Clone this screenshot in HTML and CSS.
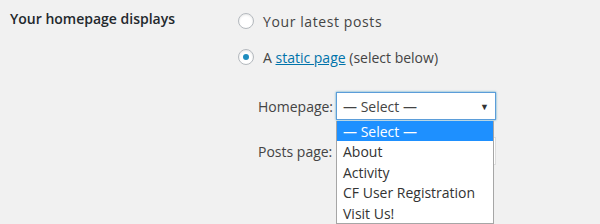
FILE: index.html
```html
<!DOCTYPE html>
<html lang="en">
<head>
    <meta charset="UTF-8">
    <title>Reading Settings</title>
    <link rel="stylesheet" href="styles.css">
</head>
<body>
    <div class="form-row">
        <div class="row-label">Your homepage displays</div>
        <div class="row-field">
            <label class="radio-line">
                <span class="radio"></span>
                <span class="latest">Your latest posts</span>
            </label>
            <label class="radio-line">
                <span class="radio checked"></span>
                A&nbsp;<a href="#" class="link">static page</a>&nbsp;(select below)
            </label>
            <div class="page-pickers">
                <div class="picker">
                    <span class="picker-label">Homepage:</span>
                    <div class="select-wrap">
                        <div class="select focused">
                            <span>— Select —</span>
                            <span class="arrow">▼</span>
                        </div>
                        <ul class="dropdown">
                            <li class="active">— Select —</li>
                            <li>About</li>
                            <li>Activity</li>
                            <li>CF User Registration</li>
                            <li>Visit Us!</li>
                        </ul>
                    </div>
                </div>
                <div class="picker">
                    <span class="picker-label">Posts page:</span>
                    <!-- covered by the open dropdown above -->
                    <div class="select"></div>
                </div>
            </div>
        </div>
    </div>
</body>
</html>
```

FILE: styles.css
```css
html, body {
    height: 100%;
}
body {
    margin: 0;
    background: #f1f1f1;
    font-family: 'Open Sans', 'Noto Sans', sans-serif;
    font-size: 14px;
    color: #444;
}
.form-row {
    display: flex;
    padding: 8px 0 0 10px;
    min-height: 224px;
    box-sizing: border-box;
}
.row-label {
    width: 228px;
    font-weight: 600;
    color: #23282d;
    line-height: 22px;
}
.row-field {
    display: flex;
    flex-direction: column;
}
.radio-line {
    display: flex;
    align-items: center;
    height: 26px;
    margin-bottom: 10px;
}
.latest {
    letter-spacing: 0.6px;
}
.radio {
    width: 14px;
    height: 14px;
    border: 1px solid #b4b9be;
    border-radius: 50%;
    background: #fff;
    box-shadow: inset 0 1px 2px rgba(0, 0, 0, 0.1);
    margin-right: 9px;
    position: relative;
}
.radio.checked::after {
    content: '';
    position: absolute;
    left: 4px;
    top: 4px;
    width: 6px;
    height: 6px;
    border-radius: 50%;
    background: #1e8cbe;
}
.link {
    color: #0073aa;
}
.page-pickers {
    padding: 12px 0 0 20px;
}
.picker {
    display: flex;
    align-items: center;
    margin-bottom: 17px;
}
.picker-label {
    width: 78px;
}
.select-wrap {
    position: relative;
}
.select {
    width: 146px;
    height: 26px;
    padding: 0 6px;
    border: 1px solid #ddd;
    background: #fff;
    display: flex;
    align-items: center;
    justify-content: space-between;
}
.select.focused {
    border-color: #5b9dd9;
    box-shadow: 0 0 2px rgba(30, 140, 190, 0.8);
}
.arrow {
    font-size: 9px;
    color: #333;
}
.dropdown {
    position: absolute;
    left: 0;
    top: 29px;
    width: 156px;
    margin: 0;
    padding: 0;
    list-style: none;
    background: #fff;
    border: 1px solid #a6a6a6;
    border-top: none;
    z-index: 2;
}
.dropdown li {
    height: 20.4px;
    line-height: 21px;
    padding: 0 6px;
    color: #333;
}
.dropdown li.active {
    background: #1e90ff;
    color: #fff;
}
```
